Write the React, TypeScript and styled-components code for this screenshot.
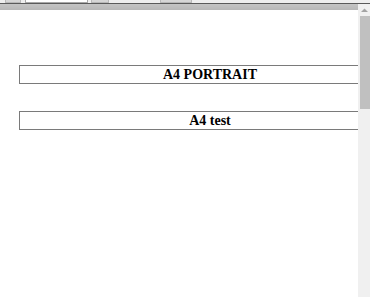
import React from "react";
import styled, { createGlobalStyle } from "styled-components";

const GlobalStyle = createGlobalStyle`
  html, body {
    margin: 0;
    padding: 0;
    background: #ffffff;
    overflow: hidden;
  }
`;

const Page = styled.div`
  width: 370px;
  height: 297px;
  display: flex;
  flex-direction: column;
  overflow: hidden;
`;

const Toolbar = styled.div`
  height: 3px;
  flex: none;
  display: flex;
  align-items: flex-end;
  gap: 3px;
  padding: 0 5px;
  background: #eeeeee;
  overflow: hidden;
  border-bottom: 1px solid #5a5a5a;
`;

const ToolButton = styled.div<{ $w: number; $ml?: number }>`
  width: ${(p) => p.$w}px;
  margin-left: ${(p) => p.$ml || 0}px;
  height: 10px;
  flex: none;
  background: #d6d6d6;
  border: 1px solid #b8b8b8;
  border-top: none;
  box-sizing: border-box;
`;

const ToolInput = styled.div`
  width: 63px;
  height: 10px;
  flex: none;
  margin-left: 1px;
  background: #ffffff;
  border: 1px solid #a8a8a8;
  border-top: none;
  box-sizing: border-box;
`;

const Viewer = styled.div`
  flex: 1;
  display: flex;
  min-height: 0;
`;

const Content = styled.div`
  flex: 1;
  min-width: 0;
  overflow: hidden;
  background: #ffffff;
`;

const HeaderBar = styled.div`
  height: 6px;
  background: linear-gradient(#c4c4c4, #b8b8b8);
`;

const Sheet = styled.div`
  padding: 55px 0 0 19px;
  display: flex;
  flex-direction: column;
  gap: 27px;
`;

const PageTitle = styled.div`
  width: 382px;
  flex: none;
  height: 19px;
  box-sizing: border-box;
  border: 1px solid #7a7a7a;
  font-family: "Liberation Serif", "Times New Roman", serif;
  font-weight: bold;
  font-size: 14px;
  line-height: 17px;
  text-align: center;
  color: #000000;
  white-space: nowrap;
`;

const ScrollBar = styled.div`
  width: 12px;
  flex: none;
  background: #f0f0f0;
  display: flex;
  flex-direction: column;
`;

const ScrollArrow = styled.div`
  height: 11px;
  flex: none;
  display: flex;
  align-items: center;
  justify-content: center;
`;

const ScrollThumb = styled.div`
  height: 93px;
  margin: 1px 0 0 2px;
  background: #c0c0c0;
`;

export default function App() {
  return (
    <Page>
      <GlobalStyle />
      <Toolbar>
        <ToolButton $w={16} />
        <ToolInput />
        <ToolButton $w={18} />
        <ToolButton $w={32} $ml={48} />
      </Toolbar>
      <Viewer>
        <Content>
          <HeaderBar />
          <Sheet>
            <PageTitle>A4 PORTRAIT</PageTitle>
            <PageTitle>A4 test</PageTitle>
          </Sheet>
        </Content>
        <ScrollBar>
          <ScrollArrow>
            <svg width="7" height="4" viewBox="0 0 7 4">
              <path d="M0 4 L3.5 0.5 L7 4 Z" fill="#a3a3a3" />
            </svg>
          </ScrollArrow>
          <ScrollThumb />
        </ScrollBar>
      </Viewer>
    </Page>
  );
}
